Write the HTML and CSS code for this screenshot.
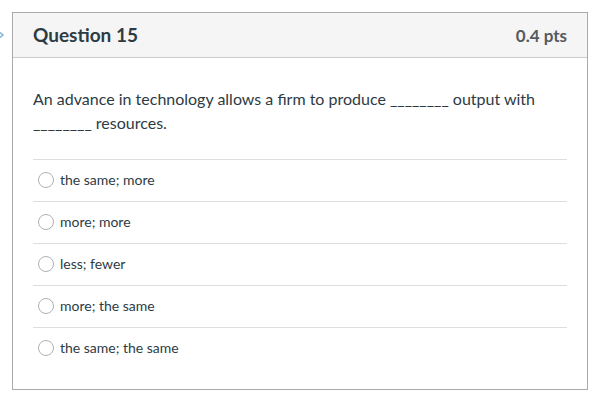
FILE: index.html
```html
<!DOCTYPE html>
<html>
<head>
<meta charset="utf-8">
<link rel="stylesheet" href="styles.css">
</head>
<body>
<div class="page">
  <span class="nav-arrow">
    <svg width="8" height="12" viewBox="0 0 8 12"><path d="M-2 2 L3 6 L-2 10" fill="none" stroke="#7fb3d5" stroke-width="1.5"/></svg>
  </span>
  <div class="question">
    <div class="header">
      <h2 class="title">Question 15</h2>
      <span class="pts">0.4 pts</span>
    </div>
    <div class="body">
      <p class="text">An advance in technology allows a firm to produce ________ output with ________ resources.</p>
      <ul class="answers">
        <li class="answer"><span class="radio"></span><span>the same; more</span></li>
        <li class="answer"><span class="radio"></span><span>more; more</span></li>
        <li class="answer"><span class="radio"></span><span>less; fewer</span></li>
        <li class="answer"><span class="radio"></span><span>more; the same</span></li>
        <li class="answer"><span class="radio"></span><span>the same; the same</span></li>
      </ul>
    </div>
  </div>
</div>
</body>
</html>
```

FILE: styles.css
```css
html, body {
  margin: 0;
  padding: 0;
  background: #fff;
}
body {
  font-family: Lato, "Open Sans", sans-serif;
  color: #2d3b45;
}
.page {
  position: relative;
  padding: 12px 0 0 12px;
}
.nav-arrow {
  position: absolute;
  left: 0;
  top: 29px;
  line-height: 0;
}
.question {
  width: 574px;
  border: 1px solid #aaaaaa;
  box-sizing: content-box;
}
.header {
  display: flex;
  align-items: center;
  justify-content: space-between;
  height: 44px;
  padding: 0 20px;
  background: #f5f5f5;
  border-bottom: 1px solid #c7cdd1;
}
.title {
  margin: 0 0 1px 0;
  font-size: 19px;
  font-weight: 700;
  color: #2d3b45;
}
.pts {
  font-size: 17px;
  font-weight: 700;
  color: #555a5e;
}
.body {
  padding: 29px 20px 20px 20px;
}
.text {
  margin: 0;
  font-size: 16px;
  line-height: 24px;
  padding-right: 20px;
}
.answers {
  list-style: none;
  margin: 24px 0 0 0;
  padding: 0;
}
.answer {
  display: flex;
  align-items: center;
  gap: 6px;
  height: 41px;
  box-sizing: border-box;
  height: 42px;
  padding-bottom: 2px;
  border-top: 1px solid #dcdfe1;
  padding-left: 5px;
  font-size: 14px;
}
.radio {
  width: 14px;
  height: 14px;
  border: 1px solid #adb1b4;
  border-radius: 50%;
  background: #fff;
}
```
